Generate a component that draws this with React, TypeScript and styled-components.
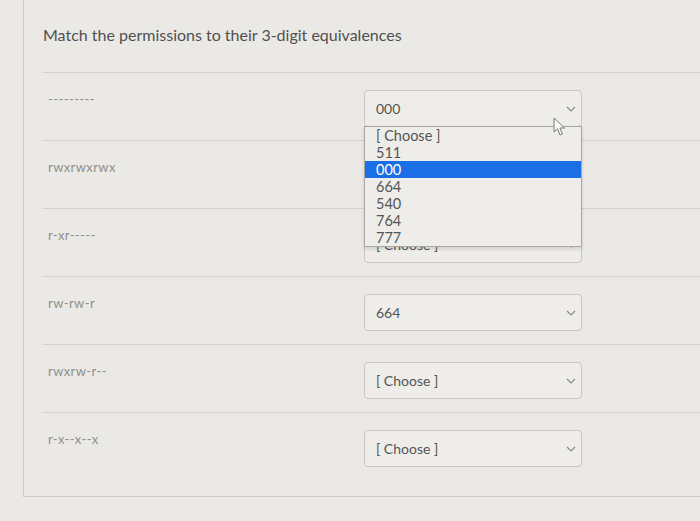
import { createGlobalStyle } from "styled-components";
import styled from "styled-components";

const GlobalStyle = createGlobalStyle`
  body {
    margin: 0;
    background: #ebe9e5;
    font-family: Lato, "Open Sans", sans-serif;
    overflow: hidden;
  }
`;

const Page = styled.div`
  padding-left: 23px;
`;

const Panel = styled.div`
  border-left: 1px solid #cfcdc9;
  border-bottom: 1px solid #cfcdc9;
  padding: 25px 0 16px 19px;
`;

const Title = styled.h1`
  margin: 0;
  font-size: 16px;
  font-weight: 400;
  line-height: 20px;
  color: #505050;
`;

const List = styled.div`
  margin-top: 27px;
`;

const Row = styled.div`
  box-sizing: border-box;
  height: 68px;
  border-top: 1px solid #d3d1cd;
  display: flex;
  align-items: flex-start;
`;

const Label = styled.div`
  box-sizing: border-box;
  width: 321px;
  margin-top: 16px;
  padding-left: 5px;
  font-size: 13px;
  line-height: 20px;
  letter-spacing: 0.4px;
  color: #908f8c;
`;

const Select = styled.div`
  position: relative;
  box-sizing: border-box;
  width: 218px;
  height: 37px;
  margin-top: 17px;
  padding: 0 5px 0 11px;
  border: 1px solid #c8c6c2;
  border-radius: 4px;
  background: #eeede9;
  display: flex;
  align-items: center;
  justify-content: space-between;
  font-size: 14px;
  color: #555;
`;

const Menu = styled.div`
  position: absolute;
  top: 100%;
  left: -1px;
  z-index: 2;
  box-sizing: border-box;
  width: 218px;
  border: 1px solid #a8a7a4;
  background: #eeede9;
  box-shadow: 0 2px 4px rgba(0, 0, 0, 0.12);
`;

const Option = styled.div<{ $active?: boolean }>`
  height: 17px;
  padding-left: 11px;
  font-size: 14.5px;
  line-height: 17px;
  color: ${(p) => (p.$active ? "#fff" : "#555")};
  background: ${(p) => (p.$active ? "#1a6fe6" : "transparent")};
`;

const Cursor = styled.svg`
  position: absolute;
  left: 188px;
  top: 26px;
  z-index: 3;
`;

const Chevron = () => (
  <svg width="10" height="6" viewBox="0 0 10 6">
    <polyline
      points="1,1 5,5 9,1"
      fill="none"
      stroke="#8a8986"
      strokeWidth="1.2"
    />
  </svg>
);

const rows = [
  { label: "---------", value: "000" },
  { label: "rwxrwxrwx", value: "[ Choose ]" },
  { label: "r-xr-----", value: "[ Choose ]" },
  { label: "rw-rw-r", value: "664" },
  { label: "rwxrw-r--", value: "[ Choose ]" },
  { label: "r-x--x--x", value: "[ Choose ]" },
];

const options = ["[ Choose ]", "511", "000", "664", "540", "764", "777"];

const App = () => {
  return (
    <Page>
      <GlobalStyle />
      <Panel>
        <Title>Match the permissions to their 3-digit equivalences</Title>
        <List>
          {rows.map((r, i) => (
            <Row key={i}>
              <Label>{r.label}</Label>
              <Select>
                <span>{r.value}</span>
                <Chevron />
                {i === 0 && (
                  <>
                    <Menu>
                      {options.map((o) => (
                        <Option key={o} $active={o === "000"}>
                          {o}
                        </Option>
                      ))}
                    </Menu>
                    <Cursor width="14" height="20" viewBox="0 0 14 20">
                      <path
                        d="M1 1 L1 15 L4.5 11.8 L7 18 L9.4 17 L6.9 11 L11.6 11 Z"
                        fill="#f7f7f5"
                        stroke="#7b7b7b"
                        strokeWidth="1"
                        strokeLinejoin="round"
                      />
                    </Cursor>
                  </>
                )}
              </Select>
            </Row>
          ))}
        </List>
      </Panel>
    </Page>
  );
};

export default App;
